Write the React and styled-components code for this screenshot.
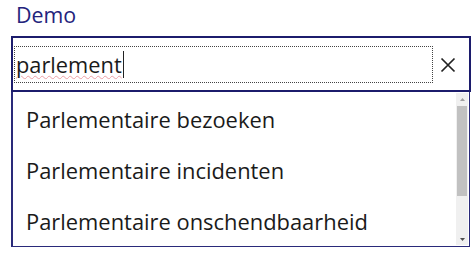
import React from 'react'
import styled, { createGlobalStyle } from 'styled-components'

const GlobalStyle = createGlobalStyle`
  html, body {
    margin: 0;
    padding: 0;
    background: #ffffff;
  }
  body {
    font-family: 'Open Sans', 'Noto Sans', sans-serif;
  }
`

const Page = styled.div`
  width: 474px;
  height: 264px;
  padding: 0 3px 0 11px;
  box-sizing: border-box;
  display: flex;
  flex-direction: column;
`

const Label = styled.div`
  color: #23237c;
  font-size: 21.4px;
  line-height: 26px;
  height: 36px;
  padding: 2px 0 0 5px;
  box-sizing: border-box;
`

const InputBox = styled.div`
  height: 56px;
  border: 2px solid #1c1c6c;
  box-sizing: border-box;
  display: flex;
  align-items: center;
  padding: 1px 10px 0 1px;
  gap: 4px;
`

const FocusField = styled.div`
  flex: 1;
  height: 37px;
  border: 1px dotted #444;
  box-sizing: border-box;
  display: flex;
  align-items: center;
  padding: 0 1px 1px;
`

const TypedText = styled.span`
  font-size: 21.8px;
  color: #1a1a1a;
  text-decoration: underline wavy #eca0a6;
  text-decoration-thickness: 1px;
  text-underline-offset: 2px;
`

const Caret = styled.span`
  display: inline-block;
  width: 1px;
  height: 27px;
  margin-left: 1px;
  background: #222;
`

const ClearButton = styled.button`
  border: none;
  background: none;
  padding: 0;
  width: 22px;
  height: 22px;
  display: flex;
  align-items: center;
  justify-content: center;
  cursor: pointer;
`

const Dropdown = styled.div`
  height: 155px;
  border: 1px solid #2a2a7a;
  border-left-width: 2px;
  border-top: none;
  box-sizing: border-box;
  display: flex;
  margin-right: 1px;
`

const List = styled.ul`
  flex: 1;
  list-style: none;
  margin: 0;
  padding: 2px 0 0;
`

const Item = styled.li`
  height: 51px;
  display: flex;
  align-items: center;
  padding-left: 13px;
  font-size: 21.9px;
  color: #1a1a1a;
`

const Scrollbar = styled.div`
  width: 12px;
  margin: 1px 1px 1px 0;
  background: #f0f0f0;
  display: flex;
  flex-direction: column;
  align-items: center;
`

const Arrow = styled.div`
  height: 12px;
  display: flex;
  align-items: center;
  justify-content: center;
`

const Track = styled.div`
  flex: 1;
  width: 100%;
  padding-top: 1px;
`

const Thumb = styled.div`
  width: 10px;
  margin: 0 auto;
  height: 90px;
  background: #c1c1c1;
`

const items = [
  'Parlementaire bezoeken',
  'Parlementaire incidenten',
  'Parlementaire onschendbaarheid',
]

export default function App() {
  return (
    <>
      <GlobalStyle />
      <Page>
        <Label>Demo</Label>
        <InputBox>
          <FocusField>
            <TypedText>parlement</TypedText>
            <Caret />
          </FocusField>
          <ClearButton aria-label="Clear">
            <svg width="16" height="16" viewBox="0 0 16 16">
              <path d="M1.5 1.5 L14.5 14.5 M14.5 1.5 L1.5 14.5" stroke="#222" strokeWidth="1.7" fill="none" />
            </svg>
          </ClearButton>
        </InputBox>
        <Dropdown>
          <List>
            {items.map((item) => (
              <Item key={item}>{item}</Item>
            ))}
          </List>
          <Scrollbar>
            <Arrow>
              <svg width="5" height="3" viewBox="0 0 5 3"><path d="M0 3 L2.5 0 L5 3 Z" fill="#a0a0a0" /></svg>
            </Arrow>
            <Track>
              <Thumb />
            </Track>
            <Arrow>
              <svg width="5" height="3" viewBox="0 0 5 3"><path d="M0 0 L2.5 3 L5 0 Z" fill="#505050" /></svg>
            </Arrow>
          </Scrollbar>
        </Dropdown>
      </Page>
    </>
  )
}
